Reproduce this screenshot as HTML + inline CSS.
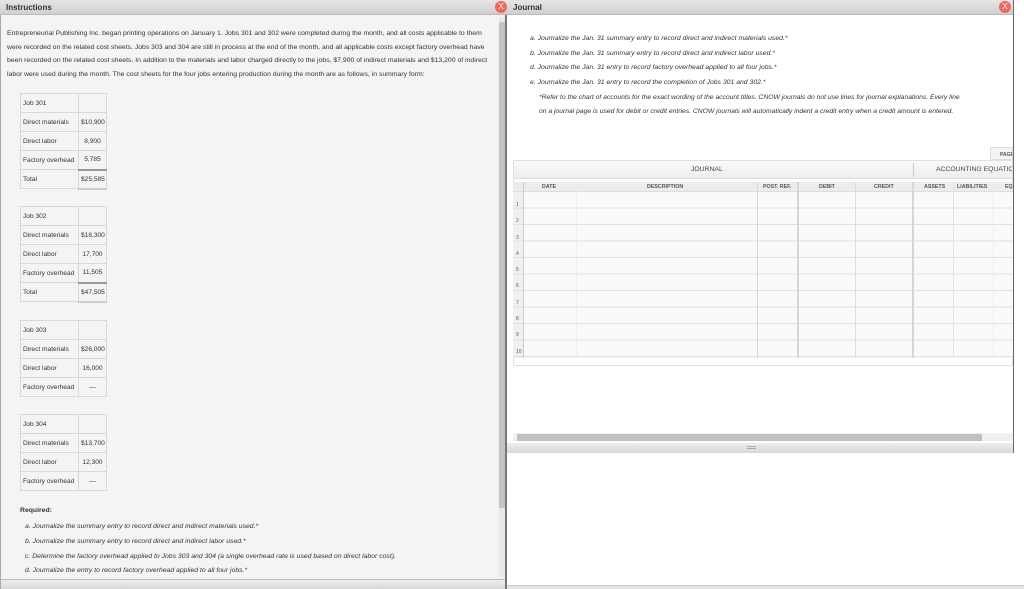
<!DOCTYPE html>
<html><head><meta charset="utf-8"><style>
*{margin:0;padding:0;box-sizing:border-box}
body{width:1024px;height:589px;overflow:hidden;background:#fff;font-family:"Liberation Sans",Arial,sans-serif;position:relative;color:#222}
.abs{position:absolute}
.hdr{background:linear-gradient(#e6e6e6,#cfcfcf);height:15px;font-size:8px;font-weight:bold;color:#333;padding:3px 0 0 6px;border-bottom:1px solid #bbb}
.x{position:absolute;width:12px;height:12px;border-radius:50%;background:#f0695c;color:#fff;font-size:8px;text-align:center;line-height:12px;top:1px}
.lt{font-size:6.85px;color:#333;white-space:nowrap}
table.j{position:absolute;border-collapse:collapse;font-size:6.6px;color:#333;table-layout:fixed}
table.j td{border:1px solid #d8d8d8;height:19px;padding:0 2px;background:#f3f4f4;white-space:nowrap;overflow:hidden}
table.j td.l{width:58px}
table.j td.v{text-align:center;width:28px}
table.j tr.t td.v{border-top:2px solid #999;border-bottom:2px solid #ccc}
.it{font-size:6.85px;font-style:italic;color:#333;white-space:nowrap}
</style></head><body>
<div class="abs" style="left:0;top:0;width:507px;height:589px;background:#f3f4f4;border-left:1px solid #aaa;border-right:2px solid #777"></div>
<div class="abs hdr" style="left:0;top:0;width:507px">Instructions</div>
<div class="x" style="left:495px">X</div>
<div class="abs" style="left:499px;top:17px;width:6px;height:560px;background:#e8e8e8"></div>
<div class="abs" style="left:499px;top:22px;width:6px;height:486px;background:#c4c4c4"></div>
<div class="abs lt" style="left:7px;top:27px;line-height:13.7px">Entrepreneurial Publishing Inc. began printing operations on January 1. Jobs 301 and 302 were completed during the month, and all costs applicable to them<br>were recorded on the related cost sheets. Jobs 303 and 304 are still in process at the end of the month, and all applicable costs except factory overhead have<br>been recorded on the related cost sheets. In addition to the materials and labor charged directly to the jobs, $7,900 of indirect materials and $13,200 of indirect<br>labor were used during the month. The cost sheets for the four jobs entering production during the month are as follows, in summary form:</div>

<table class="j" style="left:20px;top:93px;width:86px"><tr><td class="l">Job 301</td><td class="v"></td></tr><tr><td class="l">Direct materials</td><td class="v">$10,900</td></tr><tr><td class="l">Direct labor</td><td class="v">8,900</td></tr><tr><td class="l">Factory overhead</td><td class="v">5,785</td></tr><tr class="t"><td class="l">Total</td><td class="v">$25,585</td></tr></table>
<table class="j" style="left:20px;top:206px;width:86px"><tr><td class="l">Job 302</td><td class="v"></td></tr><tr><td class="l">Direct materials</td><td class="v">$18,300</td></tr><tr><td class="l">Direct labor</td><td class="v">17,700</td></tr><tr><td class="l">Factory overhead</td><td class="v">11,505</td></tr><tr class="t"><td class="l">Total</td><td class="v">$47,505</td></tr></table>
<table class="j" style="left:20px;top:320px;width:86px"><tr><td class="l">Job 303</td><td class="v"></td></tr><tr><td class="l">Direct materials</td><td class="v">$26,000</td></tr><tr><td class="l">Direct labor</td><td class="v">16,000</td></tr><tr><td class="l">Factory overhead</td><td class="v">—</td></tr></table>
<table class="j" style="left:20px;top:414px;width:86px"><tr><td class="l">Job 304</td><td class="v"></td></tr><tr><td class="l">Direct materials</td><td class="v">$13,700</td></tr><tr><td class="l">Direct labor</td><td class="v">12,300</td></tr><tr><td class="l">Factory overhead</td><td class="v">—</td></tr></table>

<div class="abs lt" style="left:20px;top:507px;font-weight:bold">Required:</div>
<div class="abs it" style="left:25px;top:520px;line-height:14.8px">a. Journalize the summary entry to record direct and indirect materials used.*<br>b. Journalize the summary entry to record direct and indirect labor used.*<br>c. Determine the factory overhead applied to Jobs 303 and 304 (a single overhead rate is used based on direct labor cost).<br>d. Journalize the entry to record factory overhead applied to all four jobs.*</div>
<div class="abs" style="left:1px;top:579px;width:504px;height:10px;background:linear-gradient(#eee,#d8d8d8);border-top:1px solid #bbb"></div>

<div class="abs hdr" style="left:507px;top:0;width:507px">Journal</div>
<div class="x" style="left:999px">X</div>
<div class="abs it" style="left:530px;top:32px;line-height:14.5px">a. Journalize the Jan. 31 summary entry to record direct and indirect materials used.*<br>b. Journalize the Jan. 31 summary entry to record direct and indirect labor used.*<br>d. Journalize the Jan. 31 entry to record factory overhead applied to all four jobs.*<br>e. Journalize the Jan. 31 entry to record the completion of Jobs 301 and 302.*</div>
<div class="abs it" style="left:539px;top:91px;line-height:14px;font-size:6.75px">*Refer to the chart of accounts for the exact wording of the account titles. CNOW journals do not use lines for journal explanations. Every line<br>on a journal page is used for debit or credit entries. CNOW journals will automatically indent a credit entry when a credit amount is entered.</div>
<div class="abs" style="left:990px;top:147px;width:23px;height:13px;background:#f4f4f4;border:1px solid #ddd;font-size:5px;font-weight:bold;color:#555;padding:4px 0 0 9px;overflow:hidden;white-space:nowrap">PAGE</div>
<div class="abs" style="left:513px;top:160px;width:500px;height:206px;border:1px solid #e0e0e0;border-radius:2px;background:#fff;overflow:hidden">
<div class="abs" style="left:0;top:0;width:500px;height:18px;background:linear-gradient(#fafafa,#eee);border-bottom:1px solid #ddd"></div>
<div class="abs" style="left:399px;top:2px;width:1px;height:14px;background:#ccc"></div>
<div class="abs" style="left:177px;top:5px;font-size:6.8px;color:#444">JOURNAL</div>
<div class="abs" style="left:422px;top:5px;font-size:6.8px;color:#444;white-space:nowrap">ACCOUNTING EQUATION</div>
</div>
<div class="abs" style="left:513px;top:182px;width:500px;height:176px;overflow:hidden">
<div class="abs" style="left:0;top:0;width:500px;height:10px;background:#ececec;border-bottom:1px solid #ddd"></div>
<div class="abs" style="left:10px;top:10px;width:490px;height:166px;background:#fafafa"></div>
<div class="abs" style="left:0;top:10px;width:10px;height:166px;background:#f0f0f0"></div>
<div class="abs" style="left:0;top:10px;width:500px;height:166px;background:repeating-linear-gradient(transparent 0 15.5px,#e0e0e0 15.5px 16.5px)"></div>
<div class="abs" style="left:10px;top:0;width:1px;height:176px;background:#ccc"></div>
<div class="abs" style="left:63px;top:0;width:1px;height:176px;background:#eee"></div>
<div class="abs" style="left:244px;top:0;width:1px;height:176px;background:#d6d6d6"></div>
<div class="abs" style="left:284px;top:0;width:2px;height:176px;background:#d6d6d6"></div>
<div class="abs" style="left:342px;top:0;width:1px;height:176px;background:#ddd"></div>
<div class="abs" style="left:399px;top:0;width:2px;height:176px;background:#d6d6d6"></div>
<div class="abs" style="left:440px;top:0;width:1px;height:176px;background:#e2e2e2"></div>
<div class="abs" style="left:480px;top:0;width:1px;height:176px;background:#eee"></div>
<div style="position:absolute;top:2px;left:0;width:500px;font-size:5.3px;font-weight:bold;color:#555">
<span class="abs" style="left:29px">DATE</span><span class="abs" style="left:134px">DESCRIPTION</span><span class="abs" style="left:250px">POST. REF.</span><span class="abs" style="left:306px">DEBIT</span><span class="abs" style="left:361px">CREDIT</span><span class="abs" style="left:411px">ASSETS</span><span class="abs" style="left:444px">LIABILITIES</span><span class="abs" style="left:492px">EQU</span></div>
<div class="abs" style="left:3px;top:15px;font-size:5px;color:#557;line-height:16.3px">1<br>2<br>3<br>4<br>5<br>6<br>7<br>8<br>9<br>10</div>
</div>
<div class="abs" style="left:1013px;top:0;width:1px;height:453px;background:#666"></div>
<div class="abs" style="left:513px;top:433px;width:500px;height:8px;background:#f0f0f0"></div>
<div class="abs" style="left:517px;top:434px;width:465px;height:7px;background:#c0c0c0"></div>
<div class="abs" style="left:507px;top:443px;width:506px;height:10px;background:linear-gradient(#eee,#d8d8d8)"></div>
<div class="abs" style="left:747px;top:446px;width:9px;height:3px;border-top:1px solid #aaa;border-bottom:1px solid #aaa"></div>
<div class="abs" style="left:507px;top:585px;width:517px;height:4px;background:#e4e4e4;border-top:1px solid #ccc"></div>
</body></html>
